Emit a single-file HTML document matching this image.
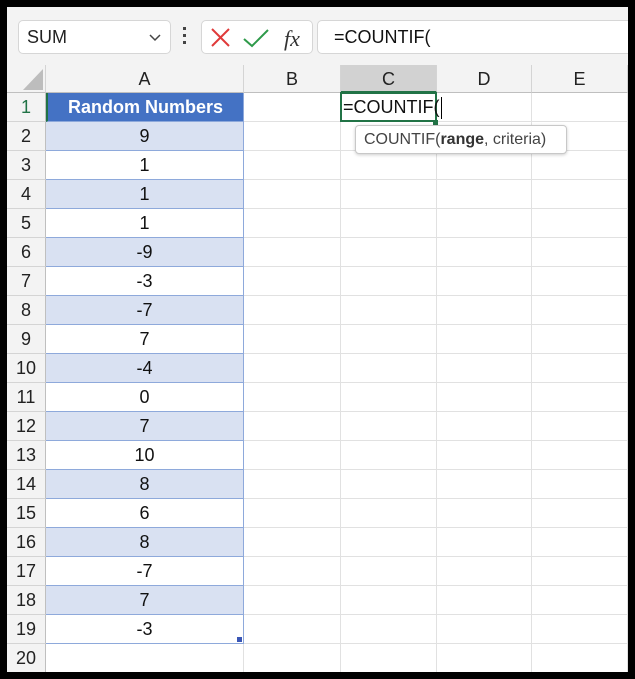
<!DOCTYPE html>
<html><head><style>
body{margin:0;width:635px;height:679px;background:#000;position:relative;overflow:hidden;font-family:"Liberation Sans",sans-serif}
#in{position:absolute;left:7px;top:7px;width:621px;height:665px;background:#fff;overflow:hidden}
#tb{position:absolute;left:0;top:0;width:621px;height:58px;background:#f3f3f3}
.box{position:absolute;background:#fff;border:1px solid #d6d6d6;border-radius:5px;box-sizing:border-box}
.ch{position:absolute;top:58px;height:28px;background:#f3f3f3;border-right:1px solid #d4d4d4;border-bottom:1px solid #bfbfbf;box-sizing:border-box;text-align:center;line-height:28px;font-size:18px;color:#222}
.rh{position:absolute;left:0;width:39px;height:29px;background:#f3f3f3;border-bottom:1px solid #d4d4d4;border-right:1px solid #bfbfbf;box-sizing:border-box;text-align:center;line-height:29px;font-size:18px;color:#222}
.c{position:absolute;height:29px;box-sizing:border-box;border-right:1px solid #e1e1e1;border-bottom:1px solid #e1e1e1}
.a{position:absolute;left:39px;width:198px;height:29px;box-sizing:border-box;border-right:1px solid #8ea9db;border-bottom:1px solid #8ea9db;text-align:center;line-height:29px;font-size:18px;color:#111}
</style></head><body><div id="in">
<div id="tb">
<div class="box" style="left:11px;top:13px;width:153px;height:34px;font-size:18px;line-height:32px;padding-left:8px;color:#222">SUM<svg width="14" height="10" style="position:absolute;right:8px;top:12px"><path d="M2 2L7 7L12 2" stroke="#444" stroke-width="1.5" fill="none"/></svg></div>
<div style="position:absolute;left:176px;top:20px;width:3px;height:3px;background:#444;box-shadow:0 7px 0 #444,0 14px 0 #444"></div>
<div class="box" style="left:194px;top:13px;width:112px;height:34px">
<svg width="112" height="34" style="position:absolute;left:0;top:0"><path d="M10 8L27 25M27 8L10 25" stroke="#e03a3a" stroke-width="2" fill="none"/><path d="M42 18L50 25L66 9" stroke="#2e9a4a" stroke-width="2" fill="none"/><text x="82" y="25" font-family="Liberation Serif" font-style="italic" font-size="22" fill="#333">fx</text></svg></div>
<div class="box" style="left:310px;top:13px;width:320px;height:34px;font-size:18px;line-height:32px;padding-left:16px;color:#111;border-radius:5px 0 0 5px">=COUNTIF(</div>
</div>
<div class="ch" style="left:0;width:39px"><svg width="39" height="28"><path d="M36 4L36 25L16 25Z" fill="#bdbdbd"/></svg></div>
<div class="ch" style="left:39px;width:198px">A</div>
<div class="ch" style="left:237px;width:97px">B</div>
<div class="ch" style="left:334px;width:96px;background:#d2d2d2;border-bottom:2px solid #217346">C</div>
<div class="ch" style="left:430px;width:95px">D</div>
<div class="ch" style="left:525px;width:96px">E</div>
<div id="g"></div>
<div style="position:absolute;left:333px;top:85px;width:97px;height:30px;border:2px solid #217346;box-sizing:border-box;background:#fff"></div>
<div style="position:absolute;left:336px;top:87px;font-size:18px;line-height:26px;color:#111;white-space:nowrap">=COUNTIF(<span style="display:inline-block;width:1px;height:22px;background:#000;vertical-align:middle;margin-left:1px"></span></div>
<div style="position:absolute;left:426px;top:113px;width:5px;height:5px;background:#217346"></div>
<div style="position:absolute;left:348px;top:118px;width:212px;height:29px;background:#fff;border:1px solid #c8c8c8;border-radius:4px;box-shadow:0 1px 3px rgba(0,0,0,.2);font-size:16px;line-height:27px;padding-left:8px;box-sizing:border-box;color:#444">COUNTIF(<b style="color:#333">range</b>, criteria)</div>
<div style="position:absolute;left:230px;top:630px;width:5px;height:5px;background:#3a56b5"></div>
</div>
<script>
var v=["9","1","1","1","-9","-3","-7","7","-4","0","7","10","8","6","8","-7","7","-3"],h="";
for(var i=0;i<20;i++){var y=86+i*29;
h+='<div class="rh" style="top:'+y+'px'+(i==0?';color:#217346':'')+'">'+(i+1)+'</div>';
[[237,97],[334,96],[430,95],[525,96]].forEach(function(c){h+='<div class="c" style="left:'+c[0]+'px;width:'+c[1]+'px;top:'+y+'px"></div>'});
if(i==0)h+='<div class="a" style="top:'+y+'px;background:#4472c4;color:#fff;font-weight:bold;border-left:2px solid #217346">Random Numbers</div>';
else if(i<19)h+='<div class="a" style="top:'+y+'px;background:'+(i%2?'#d9e1f2':'#fff')+'">'+v[i-1]+'</div>';
else h+='<div class="c" style="left:39px;width:198px;top:'+y+'px"></div>';}
document.getElementById('g').innerHTML=h;
</script>
</body></html>
